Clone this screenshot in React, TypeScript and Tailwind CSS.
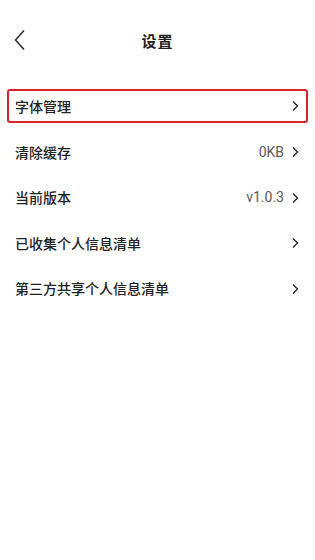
import React from "react";

const Chevron = () => (
  <svg width="8" height="12" viewBox="0 0 8 12" className="shrink-0">
    <path d="M2 1.5 L6.5 6 L2 10.5" fill="none" stroke="#222" strokeWidth="1.3" />
  </svg>
);

const rows: { label: string; value?: string }[] = [
  { label: "清除缓存", value: "0KB" },
  { label: "当前版本", value: "v1.0.3" },
  { label: "已收集个人信息清单" },
  { label: "第三方共享个人信息清单" },
];

export default function App() {
  return (
    <div
      className="w-[315px] h-[560px] bg-white text-[#222]"
      style={{ fontFamily: '"Noto Sans CJK SC", "Noto Sans", Roboto, sans-serif' }}
    >
      <div className="relative h-[82px] flex items-center justify-center">
        <svg
          width="14"
          height="22"
          viewBox="0 0 14 22"
          className="absolute left-[13px] top-[29px]"
        >
          <path d="M11 1.5 L2.5 11 L11 20.5" fill="none" stroke="#222" strokeWidth="1.4" />
        </svg>
        <span className="text-[15px] font-bold tracking-[1px]">设置</span>
      </div>
      <div className="h-[2px]" />
      <div className="h-[45.5px] flex items-center px-[7px]">
        <div className="w-full h-[34px] border-2 border-[#d7252b] rounded-[3px] flex items-center justify-between pl-[6px] pr-[7px] -mt-[1px]">
          <span className="text-[14px] font-medium">字体管理</span>
          <Chevron />
        </div>
      </div>
      {rows.map((r) => (
        <div key={r.label} className="h-[45.5px] flex items-center justify-between pl-[15px] pr-[16px]">
          <span className="text-[14px] font-medium">{r.label}</span>
          <div className="flex items-center gap-[7px]">
            {r.value && (
              <span
                className="text-[14px] text-[#5a5a5a]"
                style={{ fontFamily: 'Roboto, "Noto Sans", sans-serif' }}
              >
                {r.value}
              </span>
            )}
            <Chevron />
          </div>
        </div>
      ))}
    </div>
  );
}
